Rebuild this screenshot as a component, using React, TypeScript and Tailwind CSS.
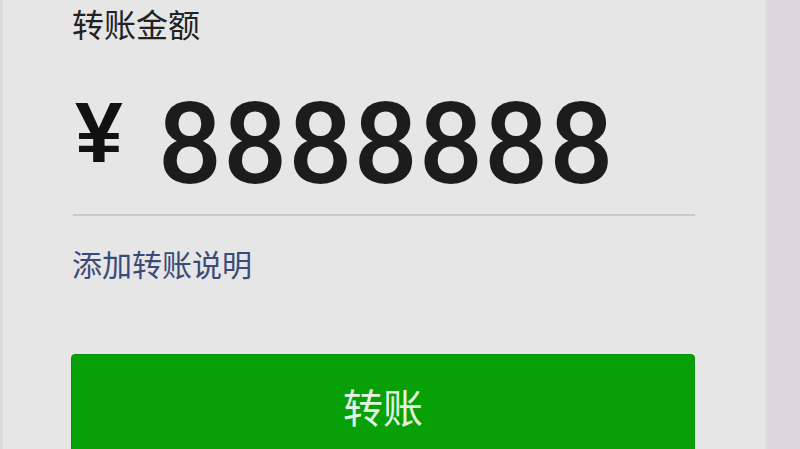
import React from "react";

export default function App() {
  const cjk = { fontFamily: '"Noto Sans CJK SC", "Noto Sans", sans-serif' };
  return (
    <div className="w-[800px] h-[449px] overflow-hidden flex bg-[#e6e6e6]">
      <div className="w-[3px] bg-[#dcdcdc]" />
      <div className="flex-1 flex flex-col pl-[68px] pr-[70px] overflow-hidden" style={cjk}>
        <div className="shrink-0 mt-[1px] ml-[1px] text-[32px] leading-[45px] text-[#222222]">转账金额</div>
        <div className="shrink-0 flex items-start mt-[46px] h-[118px]">
          <span
            className="text-[86px] leading-none font-bold text-[#111111] -mt-[3px] ml-[4px]"
            style={{ fontFamily: '"Liberation Sans", sans-serif' }}
          >
            ¥
          </span>
          <span
            className="ml-[35px] text-[113px] leading-none font-medium text-[#1c1c1c] tracking-[1px] -mt-[4px]"
            style={{ fontFamily: 'Roboto, sans-serif' }}
          >
            8888888
          </span>
        </div>
        <div className="shrink-0 h-[2px] bg-[#c9c9c9] mt-[4px] ml-[2px]" />
        <div className="shrink-0 mt-[27px] ml-[1px] text-[30px] leading-[40px] text-[#3b4a78]">添加转账说明</div>
        <div className="shrink-0 mt-[71px] h-[120px] rounded-[4px] bg-[#07a107] border border-[#0a930a] flex justify-center pt-[23px]">
          <span className="text-[40px] leading-[56px] text-[#e2f5e2]">转账</span>
        </div>
      </div>
      <div className="w-[2px] bg-[#e0e0e0]" />
      <div className="w-[33px] bg-[#dbd8db]" />
    </div>
  );
}
